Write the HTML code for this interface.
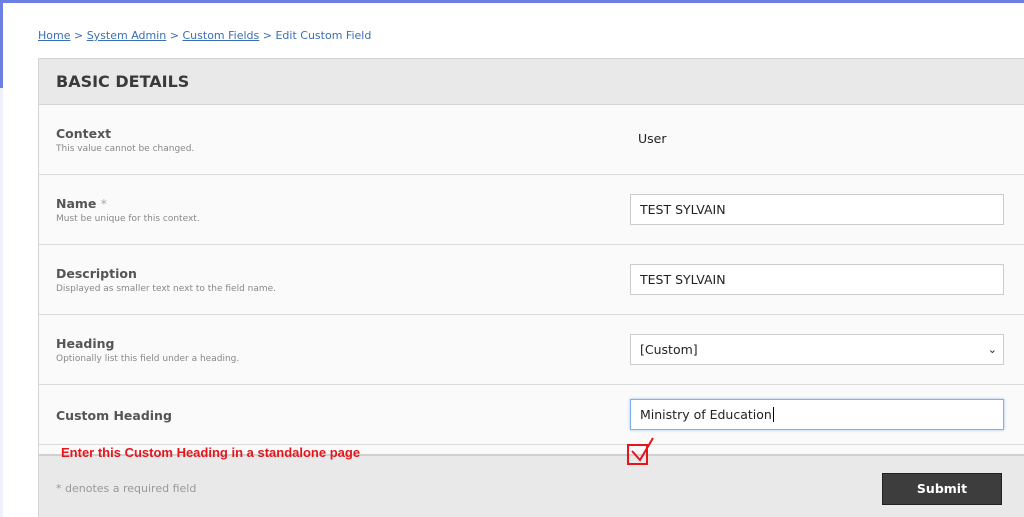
<!DOCTYPE html>
<html><head><style>
html,body{margin:0;width:1024px;height:517px;overflow:hidden}
body{background:#fff;font-family:"DejaVu Sans","Liberation Sans",sans-serif;position:relative}
.tb{position:absolute;left:0;top:0;width:1024px;height:3px;background:#6d7fe0}
.lb{position:absolute;left:0;top:0;width:3px;height:88px;background:#6d7fe0}
.lb2{position:absolute;left:0;top:88px;width:3px;height:429px;background:#eef0fb}
.bc{position:absolute;left:38px;top:29px;font-size:11px;color:#3a6fb5}
.bc a{color:#3a6fb5;text-decoration:underline}
.card{position:absolute;left:38px;top:58px;width:986px;height:459px;border:1px solid #d4d4d4;border-right:none;border-bottom:none;background:#fafafa;overflow:hidden}
.hd{height:45px;background:#e9e9e9;border-bottom:1px solid #d6d6d6;font-weight:bold;font-size:16px;color:#3a3a3a;line-height:45px;padding-left:17px}
.row{position:relative;height:69px;border-bottom:1px solid #dcdcdc}
.lab{position:absolute;left:17px;font-size:12.5px;color:#555;font-weight:bold}
.sub{position:absolute;left:17px;font-size:9px;color:#888}
.inp{position:absolute;left:591px;border:1px solid #ccc;background:#fff;font-size:12.5px;color:#222;line-height:29px;padding-left:9px;box-sizing:border-box;width:374px;height:31px}
.ft{position:absolute;left:0;top:395px;width:986px;height:80px;background:#e9e9e9;border-top:2px solid #d0d0d0}
</style></head><body>
<div class="tb"></div><div class="lb"></div><div class="lb2"></div>
<div class="bc"><a>Home</a> &gt; <a>System Admin</a> &gt; <a>Custom Fields</a> &gt; Edit Custom Field</div>
<div class="card">
<div class="hd">BASIC DETAILS</div>
<div class="row"><div class="lab" style="top:21px">Context</div><div class="sub" style="top:39px">This value cannot be changed.</div><div style="position:absolute;left:599px;top:26px;font-size:12.5px;color:#222">User</div></div>
<div class="row"><div class="lab" style="top:21px">Name <span style="color:#aaa;font-weight:normal">*</span></div><div class="sub" style="top:39px">Must be unique for this context.</div><div class="inp" style="top:19px">TEST SYLVAIN</div></div>
<div class="row"><div class="lab" style="top:21px">Description</div><div class="sub" style="top:39px">Displayed as smaller text next to the field name.</div><div class="inp" style="top:19px">TEST SYLVAIN</div></div>
<div class="row"><div class="lab" style="top:21px">Heading</div><div class="sub" style="top:39px">Optionally list this field under a heading.</div><div class="inp" style="top:19px">[Custom]<span style="position:absolute;right:6px;top:0;font-size:11px">&#8964;</span></div></div>
<div class="row" style="height:59px;background:#fafafa"><div class="lab" style="top:23px">Custom Heading</div><div class="inp" style="top:14px;border:1px solid #7fb2e6;box-shadow:0 0 3px #9cc6f0">Ministry of Education<span style="border-left:1px solid #000;margin-left:1px"></span></div></div>
<div class="ft"><div style="position:absolute;left:17px;top:26px;font-size:11px;color:#999">* denotes a required field</div>
<div style="position:absolute;left:843px;top:17px;width:118px;height:30px;background:#3d3d3d;border:1px solid #222;color:#fff;font-weight:bold;font-size:12.5px;text-align:center;line-height:30px">Submit</div></div>
</div>
<div style="position:absolute;left:61px;top:445px;font-family:'Liberation Sans',sans-serif;font-weight:bold;font-size:13px;color:#e8141c">Enter this Custom Heading in a standalone page</div>
<svg style="position:absolute;left:625px;top:437px" width="35" height="32"><rect x="3" y="8" width="19" height="19" fill="none" stroke="#e8141c" stroke-width="2"/><path d="M7 14 L15 23 L28 1" fill="none" stroke="#e8141c" stroke-width="2"/></svg>
</body></html>
